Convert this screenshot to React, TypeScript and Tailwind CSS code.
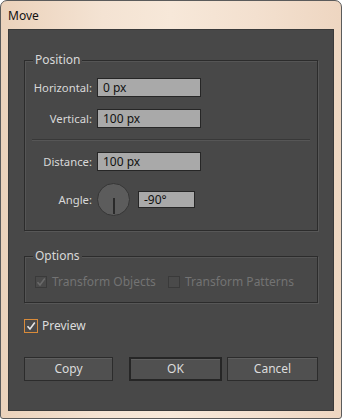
import React from "react";

const font = { fontFamily: '"Noto Sans", "Open Sans", sans-serif' };

function Input({ value, w }: { value: string; w: string }) {
  return (
    <div
      className={`${w} h-[19px] bg-[#a9a9a9] border border-[#262626] flex items-center pl-[5px] text-[12px] text-[#111] leading-none`}
    >
      {value}
    </div>
  );
}

function Row({ label, children }: { label: string; children: React.ReactNode }) {
  return (
    <div className="flex items-center">
      <div className="w-[72px] text-right pr-[5px] text-[11.3px] text-[#d8d8d8] leading-none">{label}</div>
      {children}
    </div>
  );
}

function Group({ title, children, className }: { title: string; children: React.ReactNode; className?: string }) {
  return (
    <div className={`relative mx-[15px] border border-[#2c2c2c] shadow-[1px_1px_0_#575757,inset_1px_1px_0_#555] ${className ?? ""}`}>
      <span className="absolute left-[8px] top-[-9px] px-[2px] bg-[#484848] text-[12px] leading-[16px] text-[#d8d8d8]">
        {title}
      </span>
      {children}
    </div>
  );
}

function Check({ checked, disabled, preview }: { checked?: boolean; disabled?: boolean; preview?: boolean }) {
  const border = preview ? "border-[#d98b3a]" : disabled ? "border-[#3a3a3a]" : "border-[#2a2a2a]";
  const size = preview ? "w-[14px] h-[14px]" : "w-[12px] h-[12px]";
  const stroke = disabled ? "#6a6a6a" : "#e6e6e6";
  return (
    <div className={`${size} border ${border} bg-[#4a4a4a] flex items-center justify-center`}>
      {checked && (
        <svg width="10" height="10" viewBox="0 0 10 10">
          <path d="M1.5 5.2 L4 8 L8.8 1.5" fill="none" stroke={stroke} strokeWidth="1.6" />
        </svg>
      )}
    </div>
  );
}

function Button({ label, def, w }: { label: string; def?: boolean; w: string }) {
  return (
    <div
      className={`${w} h-[24px] flex items-center justify-center bg-[#505050] text-[12px] text-[#dcdcdc] ${
        def ? "border-2 border-[#262626]" : "border border-[#2c2c2c]"
      } shadow-[inset_0_1px_0_#5e5e5e]`}
    >
      {label}
    </div>
  );
}

export default function App() {
  return (
    <div
      style={font}
      className="w-[342px] h-[419px] bg-[linear-gradient(90deg,#ebd2bb_0%,#f4e3d3_30%,#f7e8d9_50%,#f3e0cf_75%,#eed6c1_100%)] border border-[#5b5b5b] rounded-t-[7px] rounded-b-[3px] flex flex-col"
    >
      <div className="h-[28px] flex items-center pl-[7px] pt-[1px] text-[12px] text-[#111]">Move</div>
      <div className="mx-[7px] h-[382px] bg-[#484848] border border-[#3a3a3a] flex flex-col">
        <Group title="Position" className="mt-[30px]">
          <div className="pt-[17px] pb-[14px] flex flex-col">
            <Row label="Horizontal:">
              <Input value="0 px" w="w-[104px]" />
            </Row>
            <div className="mt-[12px]">
              <Row label="Vertical:">
                <Input value="100 px" w="w-[104px]" />
              </Row>
            </div>
            <div className="mt-[11px] mx-[7px] h-[1px] bg-[#383838] shadow-[0_1px_0_#565656]" />
            <div className="mt-[12px]">
              <Row label="Distance:">
                <Input value="100 px" w="w-[104px]" />
              </Row>
            </div>
            <div className="mt-[12px]">
              <Row label="Angle:">
                <div className="w-[33px] h-[33px] rounded-full bg-[#5c5c5c] border border-[#363636] flex justify-center">
                  <div className="mt-[14px] w-[2px] h-[16px] bg-[#2a2a2a]" />
                </div>
                <div className="ml-[8px]">
                  <div className="w-[57px] h-[17px] bg-[#a9a9a9] border border-[#262626] flex items-center pl-[5px] text-[12px] text-[#111] leading-none">
                    -90°
                  </div>
                </div>
              </Row>
            </div>
          </div>
        </Group>
        <Group title="Options" className="mt-[25px]">
          <div className="pt-[16px] pb-[12px] pl-[10px] flex items-center h-[45px] text-[12px] text-[#737373]">
            <div className="w-[133px] flex items-center gap-[5px]">
              <Check checked disabled />
              <span>Transform Objects</span>
            </div>
            <div className="flex items-center gap-[5px]">
              <Check disabled />
              <span>Transform Patterns</span>
            </div>
          </div>
        </Group>
        <div className="mt-[15px] ml-[15px] h-[16px] flex items-center gap-[4px] text-[12px] text-[#dcdcdc]">
          <Check checked preview />
          <span>Preview</span>
        </div>
        <div className="mt-[23px] mx-[15px] flex">
          <Button label="Copy" w="w-[90px]" />
          <div className="ml-[16px]">
            <Button label="OK" def w="w-[93px]" />
          </div>
          <div className="ml-[5px]">
            <Button label="Cancel" w="w-[91px]" />
          </div>
        </div>
      </div>
    </div>
  );
}
